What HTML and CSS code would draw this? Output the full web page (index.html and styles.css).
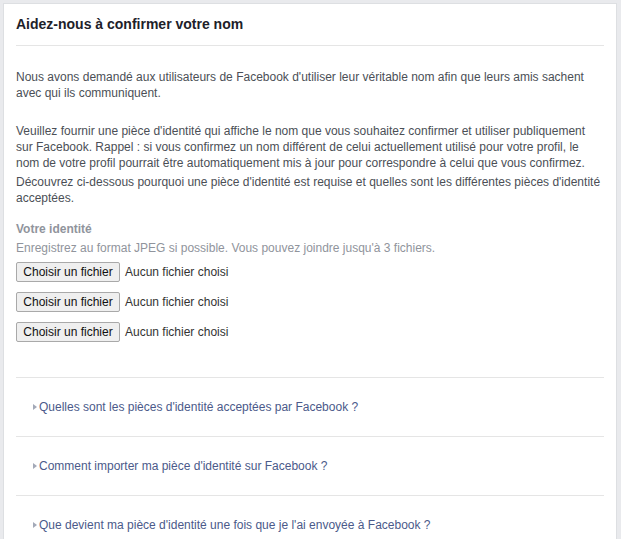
FILE: index.html
```html
<!DOCTYPE html>
<html lang="fr">
<head>
<meta charset="utf-8">
<link rel="stylesheet" href="styles.css">
</head>
<body>
<div class="card">
  <div class="header">
    <h2 class="title">Aidez-nous à confirmer votre nom</h2>
  </div>
  <div class="body">
    <p class="p1">Nous avons demandé aux utilisateurs de Facebook d'utiliser leur véritable nom afin que leurs amis sachent<br>avec qui ils communiquent.</p>
    <p class="p2">Veuillez fournir une pièce d'identité qui affiche le nom que vous souhaitez confirmer et utiliser publiquement<br>sur Facebook. Rappel : si vous confirmez un nom différent de celui actuellement utilisé pour votre profil, le<br>nom de votre profil pourrait être automatiquement mis à jour pour correspondre à celui que vous confirmez.</p>
    <p class="p3">Découvrez ci-dessous pourquoi une pièce d'identité est requise et quelles sont les différentes pièces d'identité<br>acceptées.</p>
    <div class="upload">
      <div class="label">Votre identité</div>
      <div class="hint">Enregistrez au format JPEG si possible. Vous pouvez joindre jusqu'à 3 fichiers.</div>
      <div class="file"><span class="btn">Choisir un fichier</span><span class="none">Aucun fichier choisi</span></div>
      <div class="file"><span class="btn">Choisir un fichier</span><span class="none">Aucun fichier choisi</span></div>
      <div class="file"><span class="btn">Choisir un fichier</span><span class="none">Aucun fichier choisi</span></div>
    </div>
  </div>
  <ul class="faq">
    <li><a class="q"><span class="arrow"></span>Quelles sont les pièces d'identité acceptées par Facebook ?</a></li>
    <li><a class="q"><span class="arrow"></span>Comment importer ma pièce d'identité sur Facebook ?</a></li>
    <li><a class="q"><span class="arrow"></span>Que devient ma pièce d'identité une fois que je l'ai envoyée à Facebook ?</a></li>
  </ul>
</div>
</body>
</html>
```

FILE: styles.css
```css
html, body {
  margin: 0;
  padding: 0;
  background: #e9eaed;
  height: 100%;
  overflow: hidden;
}
body {
  padding: 3px 4px 0 3px;
  font-family: "Liberation Sans", Arial, sans-serif;
  font-size: 12px;
  line-height: 16px;
  color: #4b4f56;
}
.card {
  background: #fff;
  border: 1px solid #dddfe2;
  border-bottom: none;
  padding: 0 12px;
  min-height: 600px;
}
.header {
  border-bottom: 1px solid #e5e5e5;
  padding: 11px 0 12px;
}
.title {
  margin: 0;
  font-size: 14px;
  line-height: 18px;
  font-weight: bold;
  color: #1d2129;
}
.body {
  padding-top: 23px;
  padding-bottom: 35px;
  border-bottom: 1px solid #e5e5e5;
}
.body p {
  margin: 0;
  white-space: nowrap;
}
.p1 { margin-bottom: 22px !important; }
.p2 { margin-bottom: 3px !important; }
.upload {
  margin-top: 15px;
}
.label {
  font-weight: bold;
  color: #90949c;
  line-height: 16px;
}
.hint {
  margin-top: 3px;
  color: #90949c;
}
.file {
  display: flex;
  align-items: center;
  height: 20px;
  margin-top: 6px;
}
.file + .file {
  margin-top: 10px;
}
.btn {
  box-sizing: border-box;
  width: 104px;
  height: 20px;
  display: flex;
  align-items: center;
  justify-content: center;
  background: #efefef;
  border: 1px solid #a9a9a9;
  border-radius: 2px;
  color: #111;
}
.none {
  margin-left: 5px;
  color: #333;
}
.faq {
  list-style: none;
  margin: 0;
  padding: 0;
}
.faq li {
  border-bottom: 1px solid #e5e5e5;
  padding: 21px 0 21px 17px;
  line-height: 16px;
}
.q {
  color: #4b5a8a;
  display: flex;
  align-items: center;
}
.arrow {
  width: 0;
  height: 0;
  border-top: 3px solid transparent;
  border-bottom: 3px solid transparent;
  border-left: 4px solid #a3a9b8;
  margin-right: 2px;
}
```
